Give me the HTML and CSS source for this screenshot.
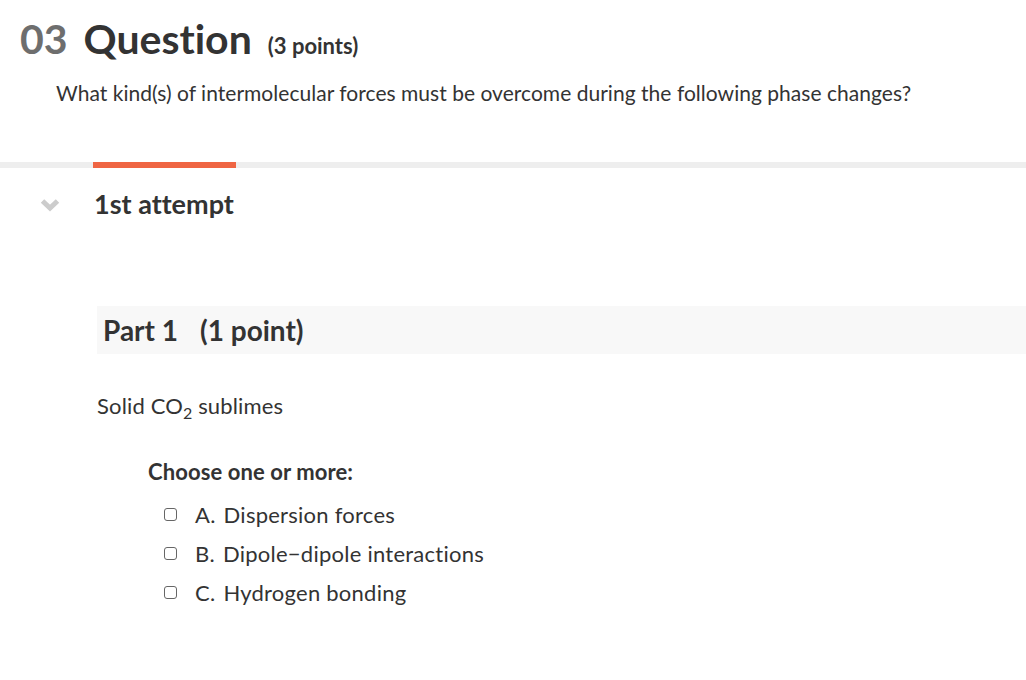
FILE: index.html
```html
<!DOCTYPE html>
<html>
<head>
<meta charset="utf-8">
<link rel="stylesheet" href="styles.css">
</head>
<body>
<div class="page">
  <header class="q-head">
    <h1 class="q-title"><span class="q-num">03</span> Question <span class="q-pts">(3 points)</span></h1>
    <p class="q-text">What kind(s) of intermolecular forces must be overcome during the following phase changes?</p>
  </header>
  <div class="tabbar"><div class="tab-active"></div></div>
  <section class="attempt">
    <div class="attempt-head">
      <svg class="chev" width="20" height="14" viewBox="0 0 20 14"><path d="M2.5 3 L10 10 L17.5 3" fill="none" stroke="#cccccc" stroke-width="5"/></svg>
      <h2 class="attempt-title">1st attempt</h2>
    </div>
    <div class="part">
      <div class="part-head"><span class="part-name">Part 1</span><span class="part-pts">(1 point)</span></div>
      <p class="prompt">Solid CO<sub>2</sub> sublimes</p>
      <div class="choices">
        <div class="choose">Choose one or more:</div>
        <label class="opt"><span class="box"></span><span class="letter">A.</span>Dispersion forces</label>
        <label class="opt"><span class="box"></span><span class="letter">B.</span>Dipole−dipole interactions</label>
        <label class="opt"><span class="box"></span><span class="letter">C.</span>Hydrogen bonding</label>
      </div>
    </div>
  </section>
</div>
</body>
</html>
```
FILE: styles.css
```css
* { box-sizing: border-box; }
html, body { margin: 0; padding: 0; background: #fff; }
body { font-family: Lato, "Open Sans", sans-serif; color: #333; font-variant-ligatures: none; font-feature-settings: "liga" 0, "clig" 0; }
.page { width: 1026px; }
.q-head { padding: 16px 0 0 20px; height: 162px; }
.q-title { margin: 0; font-size: 41px; font-weight: 700; line-height: 46px; color: #333; }
.q-num { color: #6e6e6e; margin-right: 6px; }
.q-pts { font-size: 22px; font-weight: 700; margin-left: 6px; }
.q-text { margin: 12px 0 0 36px; font-size: 21px; line-height: 24px; color: #333; letter-spacing: 0.03px; }
.tabbar { height: 6px; background: #eeeeee; position: relative; }
.tab-active { position: absolute; left: 93px; top: 0; width: 143px; height: 6px; background: #ef6543; }
.attempt-head { display: flex; align-items: center; height: 74px; padding-top: 0; }
.chev { margin-left: 40px; margin-right: 34px; }
.attempt-title { margin: 0; font-size: 27px; font-weight: 700; color: #333; padding-bottom: 4px; }
.part { margin: 64px 0 0 97px; }
.part-head { background: #f8f8f8; height: 48px; display: flex; align-items: center; padding-left: 6px; font-size: 28px; font-weight: 700; color: #333; }
.part-pts { margin-left: 22px; }
.prompt { margin: 40px 0 0 0; font-size: 22px; line-height: 24px; letter-spacing: 0.15px; }
.prompt sub { font-size: 16px; vertical-align: -5px; line-height: 0; }
.choices { margin: 42px 0 0 51px; }
.choose { font-size: 22px; font-weight: 700; line-height: 24px; margin-bottom: 11px; letter-spacing: 0.1px; }
.opt { display: flex; align-items: center; font-size: 22px; height: 39px; padding-left: 16px; letter-spacing: 0.25px; }
.box { width: 13px; height: 13px; border: 1.5px solid #666; border-radius: 3px; margin-right: 18px; }
.letter { margin-right: 8px; }
```
